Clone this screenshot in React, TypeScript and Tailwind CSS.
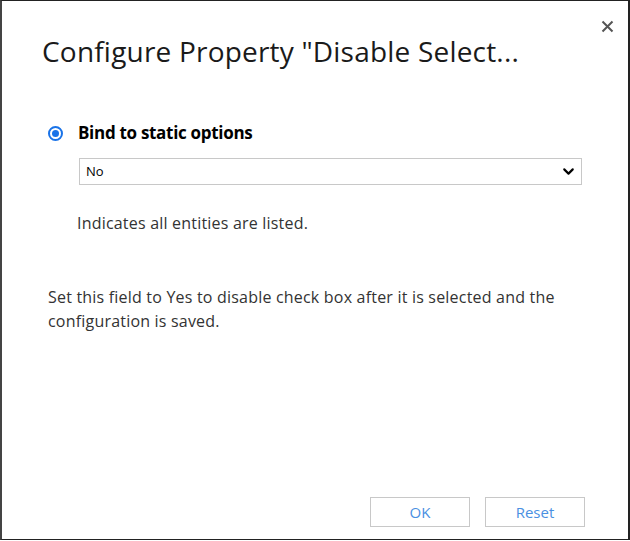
import { ChevronDown } from "lucide-react";

export default function App() {
  return (
    <div
      className="flex h-[541px] w-[630px] flex-col bg-white text-[#333]"
      style={{ fontFamily: '"Open Sans", "Noto Sans", sans-serif' }}
    >
      <div className="flex h-[540px] flex-col border-t border-r-2 border-b border-l-2 border-t-[#222] border-r-[#222] border-b-[#222] border-l-[#444]">
        {/* Header */}
        <div className="flex items-start justify-between pl-[40px] pr-[14px]">
          <h1 className="mt-[30px] text-[28px] leading-[40px] tracking-[0.2px] text-[#1a1a1a]">
            Configure Property "Disable Select...
          </h1>
          <button className="mt-[19px] text-[#555]">
            <svg width="13" height="13" viewBox="0 0 13 13">
              <path d="M1.5 1.5 L11.5 11.5 M11.5 1.5 L1.5 11.5" stroke="currentColor" strokeWidth="2" />
            </svg>
          </button>
        </div>

        {/* Body */}
        <div className="mt-[49px] flex flex-col pl-[46px] pr-[46px]">
          <label className="flex items-center gap-[15px]">
            <span className="flex h-[15px] w-[15px] items-center justify-center rounded-full border-2 border-[#1a73e8]">
              <span className="h-[7px] w-[7px] rounded-full bg-[#1a73e8]" />
            </span>
            <span className="text-[17px] font-bold leading-[26px] tracking-[-0.3px] text-black">
              Bind to static options
            </span>
          </label>

          <div className="ml-[31px] mt-[12px] flex h-[27px] items-center justify-between border border-[#c8c8c8] pl-[6px] pr-[4px]">
            <span className="text-[13px] text-black">No</span>
            <ChevronDown className="h-[17px] w-[17px] text-black" strokeWidth={3} />
          </div>

          <p className="ml-[29px] mt-[26px] text-[16px] leading-[24px] tracking-[0.2px]">
            Indicates all entities are listed.
          </p>

          <p className="mt-[50px] text-[16px] leading-[24px] tracking-[0.2px]">
            Set this field to Yes to disable check box after it is selected and the configuration is saved.
          </p>
        </div>

        {/* Footer */}
        <div className="mt-auto flex justify-end gap-[15px] pb-[12px] pr-[43px]">
          <button className="h-[30px] w-[100px] border border-[#c8c8c8] bg-white text-[15px] text-[#4a90e2]">
            OK
          </button>
          <button className="h-[30px] w-[100px] border border-[#c8c8c8] bg-white text-[15px] text-[#4a90e2]">
            Reset
          </button>
        </div>
      </div>
    </div>
  );
}
